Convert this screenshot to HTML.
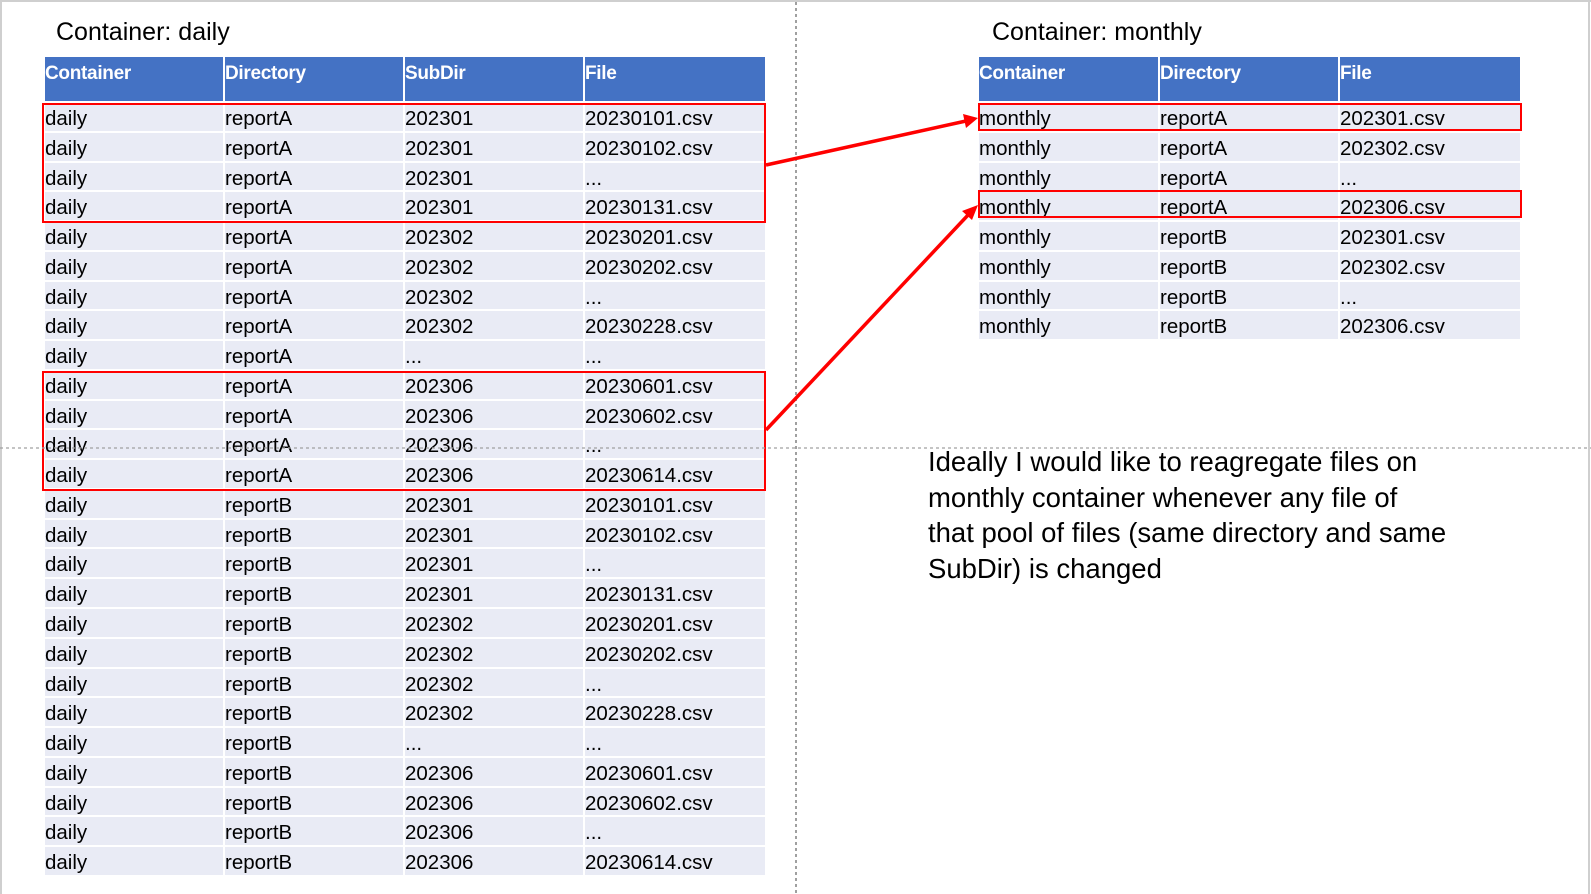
<!DOCTYPE html>
<html><head><meta charset="utf-8"><style>
html,body{margin:0;padding:0;background:#fff;}
body{width:1591px;height:894px;position:relative;overflow:hidden;font-family:"Liberation Sans",sans-serif;}
.b{position:absolute;background:#cfcfcf;}
.t{position:absolute;font-size:25px;color:#000;}
table{position:absolute;border-collapse:separate;border-spacing:0;table-layout:fixed;font-size:20.5px;}
td,th{padding:0;box-sizing:border-box;border-right:2px solid #fff;border-bottom:2px solid #fff;white-space:nowrap;overflow:hidden;text-align:left;}
th{background:#4472c4;color:#fff;font-weight:bold;font-size:19px;height:46px;vertical-align:top;padding-top:6px;letter-spacing:-0.3px}
td{background:#e9ebf5;height:29.77px;line-height:23px;padding-top:4px;vertical-align:top;}
td:last-child,th:last-child{border-right:none;}
.r{position:absolute;border:2px solid #f00;box-sizing:border-box;}
.p{position:absolute;left:928px;top:444px;font-size:25.3px;line-height:35.5px;white-space:nowrap;}
</style></head><body>
<div class="b" style="left:0;top:0;width:1591px;height:2px;"></div>
<div class="b" style="left:0;top:0;width:2px;height:894px;"></div>
<div class="b" style="left:1588px;top:0;width:2px;height:894px;"></div>

<div class="t" style="left:56px;top:18px;">Container: daily</div>
<div class="t" style="left:992px;top:18px;">Container: monthly</div>

<table style="left:45px;top:57px;width:720px;">
<colgroup><col style="width:180px"><col style="width:180px"><col style="width:180px"><col style="width:180px"></colgroup>
<tr><th>Container</th><th>Directory</th><th>SubDir</th><th>File</th></tr>
<tr><td>daily</td><td>reportA</td><td>202301</td><td>20230101.csv</td></tr>
<tr><td>daily</td><td>reportA</td><td>202301</td><td>20230102.csv</td></tr>
<tr><td>daily</td><td>reportA</td><td>202301</td><td>...</td></tr>
<tr><td>daily</td><td>reportA</td><td>202301</td><td>20230131.csv</td></tr>
<tr><td>daily</td><td>reportA</td><td>202302</td><td>20230201.csv</td></tr>
<tr><td>daily</td><td>reportA</td><td>202302</td><td>20230202.csv</td></tr>
<tr><td>daily</td><td>reportA</td><td>202302</td><td>...</td></tr>
<tr><td>daily</td><td>reportA</td><td>202302</td><td>20230228.csv</td></tr>
<tr><td>daily</td><td>reportA</td><td>...</td><td>...</td></tr>
<tr><td>daily</td><td>reportA</td><td>202306</td><td>20230601.csv</td></tr>
<tr><td>daily</td><td>reportA</td><td>202306</td><td>20230602.csv</td></tr>
<tr><td>daily</td><td>reportA</td><td>202306</td><td>...</td></tr>
<tr><td>daily</td><td>reportA</td><td>202306</td><td>20230614.csv</td></tr>
<tr><td>daily</td><td>reportB</td><td>202301</td><td>20230101.csv</td></tr>
<tr><td>daily</td><td>reportB</td><td>202301</td><td>20230102.csv</td></tr>
<tr><td>daily</td><td>reportB</td><td>202301</td><td>...</td></tr>
<tr><td>daily</td><td>reportB</td><td>202301</td><td>20230131.csv</td></tr>
<tr><td>daily</td><td>reportB</td><td>202302</td><td>20230201.csv</td></tr>
<tr><td>daily</td><td>reportB</td><td>202302</td><td>20230202.csv</td></tr>
<tr><td>daily</td><td>reportB</td><td>202302</td><td>...</td></tr>
<tr><td>daily</td><td>reportB</td><td>202302</td><td>20230228.csv</td></tr>
<tr><td>daily</td><td>reportB</td><td>...</td><td>...</td></tr>
<tr><td>daily</td><td>reportB</td><td>202306</td><td>20230601.csv</td></tr>
<tr><td>daily</td><td>reportB</td><td>202306</td><td>20230602.csv</td></tr>
<tr><td>daily</td><td>reportB</td><td>202306</td><td>...</td></tr>
<tr><td>daily</td><td>reportB</td><td>202306</td><td>20230614.csv</td></tr>
</table>

<table style="left:979px;top:57px;width:541px;">
<colgroup><col style="width:181px"><col style="width:180px"><col style="width:180px"></colgroup>
<tr><th>Container</th><th>Directory</th><th>File</th></tr>
<tr><td>monthly</td><td>reportA</td><td>202301.csv</td></tr>
<tr><td>monthly</td><td>reportA</td><td>202302.csv</td></tr>
<tr><td>monthly</td><td>reportA</td><td>...</td></tr>
<tr><td>monthly</td><td>reportA</td><td>202306.csv</td></tr>
<tr><td>monthly</td><td>reportB</td><td>202301.csv</td></tr>
<tr><td>monthly</td><td>reportB</td><td>202302.csv</td></tr>
<tr><td>monthly</td><td>reportB</td><td>...</td></tr>
<tr><td>monthly</td><td>reportB</td><td>202306.csv</td></tr>
</table>

<div class="r" style="left:42px;top:103px;width:724px;height:120px;"></div>
<div class="r" style="left:42px;top:371px;width:724px;height:120px;"></div>
<div class="r" style="left:978px;top:103px;width:544px;height:28px;"></div>
<div class="r" style="left:978px;top:190px;width:544px;height:28px;"></div>

<svg style="position:absolute;left:0;top:0" width="1591" height="894">
<line x1="796" y1="2" x2="796" y2="894" stroke="#a0a0a0" stroke-width="2" stroke-dasharray="3,3"/>
<line x1="0" y1="448" x2="1591" y2="448" stroke="#a0a0a0" stroke-width="1.3" stroke-dasharray="3,3"/>
<line x1="766" y1="165" x2="966" y2="121" stroke="#f00" stroke-width="3.5"/>
<polygon points="978,118 963,114 966,128" fill="#f00"/>
<line x1="766" y1="430" x2="969" y2="214" stroke="#f00" stroke-width="3.5"/>
<polygon points="978,205 962,211 972,220" fill="#f00"/>
</svg>

<div class="p" style="font-size:27.5px">Ideally I would like to reagregate files on<br>monthly container whenever any file of<br>that pool of files (same directory and same<br>SubDir) is changed</div>
</body></html>
